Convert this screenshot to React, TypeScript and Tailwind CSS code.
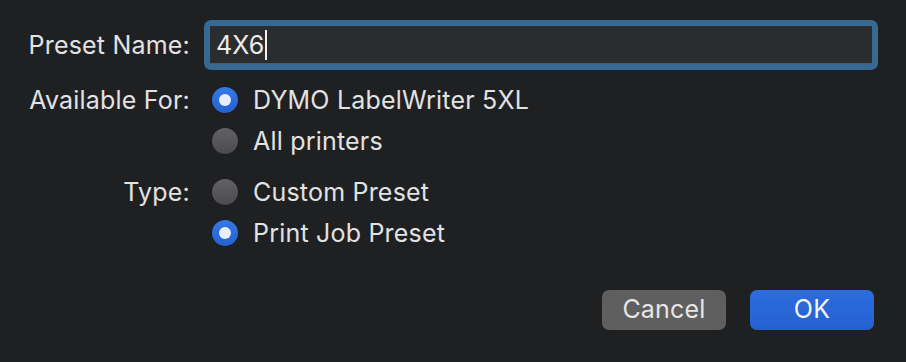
import React from "react";

function Radio({ checked, label }: { checked: boolean; label: string }) {
  return (
    <div className="flex items-center h-[26px]">
      {checked ? (
        <div className="w-[26px] h-[26px] rounded-full bg-gradient-to-b from-[#3679e6] to-[#2461cf] flex items-center justify-center shadow-[0_0_0_0.5px_rgba(0,0,0,0.3)]">
          <div className="w-[12px] h-[12px] rounded-full bg-[#e8eefb]" />
        </div>
      ) : (
        <div className="w-[26px] h-[26px] rounded-full bg-gradient-to-b from-[#626264] to-[#4b4b4d] shadow-[0_0_0_0.5px_rgba(0,0,0,0.3)]" />
      )}
      <span className="ml-[15px] text-[25px] tracking-[0.2px] leading-[26px] text-[#e2e2e2]">{label}</span>
    </div>
  );
}

export default function App() {
  return (
    <div
      className="w-[906px] h-[362px] bg-[#1f2022] text-[#e2e2e2] flex flex-col pt-[20px]"
      style={{ fontFamily: "Inter, 'Liberation Sans', sans-serif" }}
    >
      <div className="flex items-center h-[50px]">
        <div className="w-[190px] text-right text-[25px] tracking-[0.2px] leading-[26px]">Preset Name:</div>
        <div className="ml-[14px] w-[674px] h-[50px] rounded-[7px] bg-[#386993] p-[6px]">
          <div className="h-full bg-[#2b2c2e] border-b border-[#58595b] flex items-center pl-[6px]">
            <span className="text-[25px] tracking-[0.2px] leading-[26px] text-[#ececec]">4X6</span>
            <span className="w-[2px] h-[30px] bg-[#f2f2f2] ml-[1px]" />
          </div>
        </div>
      </div>

      <div className="flex mt-[17px]">
        <div className="w-[190px] text-right text-[25px] tracking-[0.2px] leading-[26px]">Available For:</div>
        <div className="ml-[22px] flex flex-col gap-[15px]">
          <Radio checked label="DYMO LabelWriter 5XL" />
          <Radio checked={false} label="All printers" />
        </div>
      </div>

      <div className="flex mt-[25px]">
        <div className="w-[190px] text-right text-[25px] tracking-[0.2px] leading-[26px]">Type:</div>
        <div className="ml-[22px] flex flex-col gap-[15px]">
          <Radio checked={false} label="Custom Preset" />
          <Radio checked label="Print Job Preset" />
        </div>
      </div>

      <div className="flex justify-end mt-[44px] pr-[32px] gap-[24px]">
        <button className="w-[124px] h-[40px] rounded-[7px] bg-[#5e5f5e] text-[25px] tracking-[0.2px] text-[#e6e6e6] flex items-center justify-center">
          Cancel
        </button>
        <button className="w-[124px] h-[40px] rounded-[7px] bg-gradient-to-b from-[#2d6ddf] to-[#2560cf] text-[25px] tracking-[0.2px] text-[#f4f6fb] flex items-center justify-center">
          OK
        </button>
      </div>
    </div>
  );
}
